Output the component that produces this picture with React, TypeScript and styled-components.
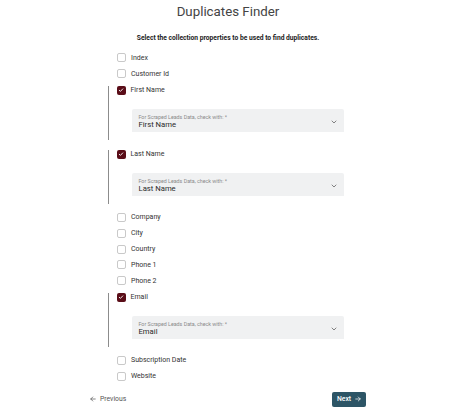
import React from "react";
import styled, { createGlobalStyle } from "styled-components";

const Global = createGlobalStyle`
  html, body { margin: 0; padding: 0; background: #ffffff; }
  body { font-family: Roboto, "Liberation Sans", sans-serif; color: #222; }
`;

const Page = styled.div`
  width: 276px;
  margin-left: 90px;
  display: flex;
  flex-direction: column;
`;

const Title = styled.h1`
  margin: 0;
  text-align: center;
  font-size: 13.3px;
  line-height: 24px;
  font-weight: 400;
  color: #444;
`;

const Subtitle = styled.p`
  margin: 8px 0 0;
  text-align: center;
  font-size: 6.7px;
  line-height: 12px;
  font-weight: 700;
  color: #222;
`;

const List = styled.div`
  margin-top: 6px;
  padding-left: 18px;
  display: flex;
  flex-direction: column;
`;

const Row = styled.label<{ $compact?: boolean }>`
  display: flex;
  align-items: center;
  gap: 5px;
  height: ${(p) => (p.$compact ? "9px" : "15.8px")};
  padding-left: ${(p) => (p.$compact ? "7.5px" : "9px")};
  font-size: 7px;
  color: #333;
`;

const Box = styled.span<{ $checked?: boolean }>`
  box-sizing: border-box;
  width: 9px;
  height: 9px;
  border-radius: 2px;
  flex: none;
  display: flex;
  align-items: center;
  justify-content: center;
  border: ${(p) => (p.$checked ? "none" : "1px solid #c9c9c9")};
  background: ${(p) => (p.$checked ? "#5a0d18" : "#fff")};
`;

const Group = styled.div`
  margin: 4px 0 6px;
  border-left: 1.5px solid #8c8c8c;
  display: flex;
  flex-direction: column;
`;

const Select = styled.div`
  box-sizing: border-box;
  margin: 14px 0 8px 22.5px;
  width: 212px;
  height: 23px;
  background: #f0f1f2;
  border-radius: 2px 2px 0 0;
  padding: 3px 7px 0;
  display: flex;
  align-items: center;
  justify-content: space-between;
`;

const SelectText = styled.div`
  display: flex;
  flex-direction: column;
`;

const SelectLabel = styled.span`
  font-size: 5.3px;
  line-height: 6px;
  color: #8a8a8a;
`;

const SelectValue = styled.span`
  font-size: 7.7px;
  line-height: 10px;
  color: #2a2a2a;
`;

const Footer = styled.div`
  margin-top: 7px;
  height: 16px;
  display: flex;
  align-items: center;
  justify-content: space-between;
`;

const PrevButton = styled.button`
  border: none;
  background: none;
  padding: 0;
  display: flex;
  align-items: center;
  gap: 4px;
  font-family: inherit;
  font-size: 6.8px;
  color: #555;
`;

const NextButton = styled.button`
  box-sizing: border-box;
  border: none;
  width: 34px;
  height: 15px;
  border-radius: 2px;
  background: #2d5566;
  color: #fff;
  font-family: inherit;
  font-size: 6.8px;
  font-weight: 500;
  display: flex;
  align-items: center;
  justify-content: center;
  gap: 4px;
  padding: 0;
`;

const Check = () => (
  <svg width="6" height="6" viewBox="0 0 12 12">
    <path d="M2.5 6.5l2.3 2.3L9.5 3.8" fill="none" stroke="#fff" strokeWidth="1.8" strokeLinecap="round" strokeLinejoin="round" />
  </svg>
);

const Chevron = () => (
  <svg width="6" height="4" viewBox="0 0 14 10">
    <path d="M2 2.5l5 5 5-5" fill="none" stroke="#555" strokeWidth="1.8" strokeLinecap="round" strokeLinejoin="round" />
  </svg>
);

const Arrow = ({ dir, color }: { dir: "left" | "right"; color: string }) => (
  <svg width="6" height="6" viewBox="0 0 12 12" style={{ transform: dir === "left" ? "scaleX(-1)" : undefined }}>
    <path d="M1.5 6h9M6.5 2l4 4-4 4" fill="none" stroke={color} strokeWidth="1.4" strokeLinecap="round" strokeLinejoin="round" />
  </svg>
);

type Prop = { name: string; checked?: boolean };

const props: Prop[] = [
  { name: "Index" },
  { name: "Customer Id" },
  { name: "First Name", checked: true },
  { name: "Last Name", checked: true },
  { name: "Company" },
  { name: "City" },
  { name: "Country" },
  { name: "Phone 1" },
  { name: "Phone 2" },
  { name: "Email", checked: true },
  { name: "Subscription Date" },
  { name: "Website" },
];

export default function App() {
  return (
    <>
      <Global />
      <Page>
        <Title>Duplicates Finder</Title>
        <Subtitle>Select the collection properties to be used to find duplicates.</Subtitle>
        <List>
          {props.map((p) =>
            p.checked ? (
              <Group key={p.name}>
                <Row $compact>
                  <Box $checked>
                    <Check />
                  </Box>
                  {p.name}
                </Row>
                <Select>
                  <SelectText>
                    <SelectLabel>For Scraped Leads Data, check with: *</SelectLabel>
                    <SelectValue>{p.name}</SelectValue>
                  </SelectText>
                  <Chevron />
                </Select>
              </Group>
            ) : (
              <Row key={p.name}>
                <Box />
                {p.name}
              </Row>
            )
          )}
        </List>
        <Footer>
          <PrevButton>
            <Arrow dir="left" color="#555" />
            Previous
          </PrevButton>
          <NextButton>
            Next
            <Arrow dir="right" color="#fff" />
          </NextButton>
        </Footer>
      </Page>
    </>
  );
}
